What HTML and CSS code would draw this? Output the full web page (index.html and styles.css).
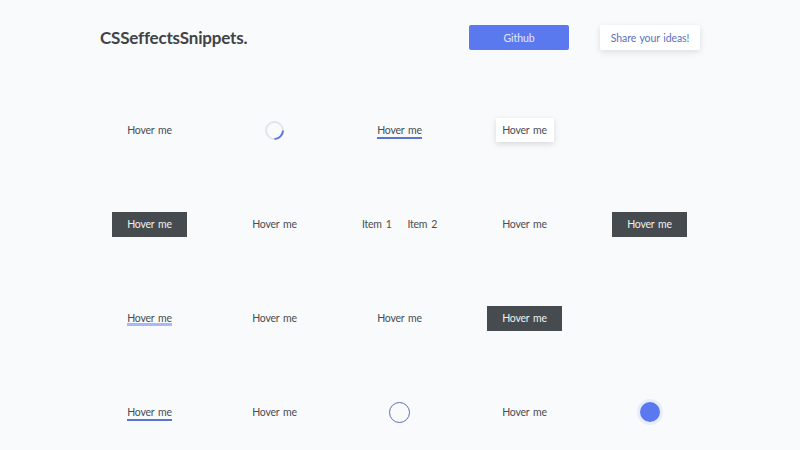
FILE: index.html
```html
<!DOCTYPE html>
<html>
<head>
<meta charset="utf-8">
<link rel="stylesheet" href="styles.css">
</head>
<body>
<header class="top">
  <div class="logo">CSSeffectsSnippets.</div>
  <nav class="actions">
    <a class="btn btn-primary">Github</a>
    <a class="btn btn-light">Share your ideas!</a>
  </nav>
</header>
<main class="grid">
  <div class="cell"><span class="txt">Hover me</span></div>
  <div class="cell"><span class="spinner"></span></div>
  <div class="cell"><span class="txt ul-thin">Hover me</span></div>
  <div class="cell"><span class="card">Hover me</span></div>
  <div class="cell"></div>

  <div class="cell"><span class="dark">Hover me</span></div>
  <div class="cell"><span class="txt">Hover me</span></div>
  <div class="cell"><span class="items"><span class="txt">Item 1</span><span class="txt">Item 2</span></span></div>
  <div class="cell"><span class="txt">Hover me</span></div>
  <div class="cell"><span class="dark">Hover me</span></div>

  <div class="cell"><span class="txt ul-thick">Hover me</span></div>
  <div class="cell"><span class="txt">Hover me</span></div>
  <div class="cell"><span class="txt">Hover me</span></div>
  <div class="cell"><span class="dark">Hover me</span></div>
  <div class="cell"></div>

  <div class="cell"><span class="txt ul-thin">Hover me</span></div>
  <div class="cell"><span class="txt">Hover me</span></div>
  <div class="cell"><span class="ring"></span></div>
  <div class="cell"><span class="txt">Hover me</span></div>
  <div class="cell"><span class="dot"></span></div>
</main>
</body>
</html>
```
FILE: styles.css
```css
* { box-sizing: border-box; }
html, body { margin: 0; padding: 0; }
body {
  width: 800px;
  height: 450px;
  overflow: hidden;
  background: #f9fafc;
  font-family: "Lato", "Open Sans", sans-serif;
  color: #4a4d52;
}
.top {
  display: flex;
  align-items: center;
  justify-content: space-between;
  padding: 25px 100px 0 100px;
  height: 50px;
}
.logo {
  font-size: 17px;
  font-weight: 700;
  color: #3f4348;
  letter-spacing: -0.2px;
}
.actions {
  display: flex;
  gap: 31px;
}
.btn {
  display: flex;
  align-items: center;
  justify-content: center;
  width: 100px;
  height: 25px;
  font-size: 10.5px;
  letter-spacing: -0.1px;
  word-spacing: 1px;
  border-radius: 2px;
}
.btn-primary {
  background: #5a79ef;
  color: #e3e8ff;
}
.btn-light {
  background: #ffffff;
  color: #5a6fc0;
  box-shadow: 0 2px 6px rgba(0,0,0,0.12);
}
.grid {
  display: grid;
  grid-template-columns: repeat(5, 125px);
  grid-auto-rows: 94px;
  width: 625px;
  margin: 33px 0 0 87px;
}
.cell {
  display: flex;
  align-items: center;
  justify-content: center;
}
.txt, .card, .dark {
  font-size: 10.5px;
  letter-spacing: -0.25px;
  word-spacing: 1.5px;
}
.txt {
  color: #4a4d52;
  line-height: 14px;
}
.ul-thin {
  border-bottom: 2px solid #5b74d6;
  line-height: 13px;
  padding-top: 2px;
}
.ul-thick {
  background: linear-gradient(#aab8f2, #aab8f2) no-repeat left bottom / 100% 3px;
  padding-bottom: 1px;
}
.card {
  display: flex;
  align-items: center;
  justify-content: center;
  width: 58px;
  height: 24px;
  background: #fff;
  color: #4a4d52;
  box-shadow: 0 2px 6px rgba(0,0,0,0.14);
}
.dark {
  display: flex;
  align-items: center;
  justify-content: center;
  width: 75px;
  height: 25px;
  background: #464b50;
  color: #eef0f2;
}
.items {
  display: flex;
  gap: 16px;
}
.spinner {
  width: 19px;
  height: 19px;
  border-radius: 50%;
  border: 2px solid #e2e4e9;
  border-right-color: #5a74e0;
  transform: rotate(45deg);
}
.ring {
  width: 21px;
  height: 21px;
  border-radius: 50%;
  border: 1.5px solid #5a6fb8;
}
.dot {
  width: 20px;
  height: 20px;
  border-radius: 50%;
  background: #5a79ef;
  box-shadow: 0 0 0 3px #e9edfb;
}
```
